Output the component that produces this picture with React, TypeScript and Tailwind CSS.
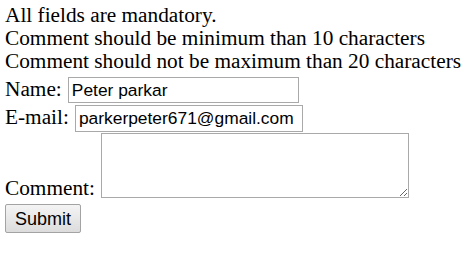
import React from "react";

export default function App() {
  return (
    <div className="min-h-[261px] w-[474px] bg-white pl-[5px] pt-[4px] text-black [font-family:'Liberation_Serif','Times_New_Roman',serif] text-[21.3px] leading-[23px]">
      <div>All fields are mandatory.</div>
      <div>Comment should be minimum than 10 characters</div>
      <div>Comment should not be maximum than 20 characters</div>
      <div className="mt-[4px] flex items-baseline">
        <span>Name:</span>
        <input
          readOnly
          defaultValue="Peter parkar"
          className="ml-[6px] h-[26px] w-[231px] border border-[#a9a9a9] px-[3px] text-[17.4px] text-black outline-none [font-family:'Liberation_Sans',Arial,sans-serif]"
        />
      </div>
      <div className="mt-[2px] flex items-baseline">
        <span>E-mail:</span>
        <input
          readOnly
          defaultValue="parkerpeter671@gmail.com"
          className="ml-[6px] h-[27px] w-[228px] border border-[#a9a9a9] pl-[3px] pr-0 text-[17.4px] text-black outline-none [font-family:'Liberation_Sans',Arial,sans-serif]"
        />
      </div>
      <div className="mt-[1px] flex items-end">
        <span className="mb-[-2px]">Comment:</span>
        <textarea
          readOnly
          className="ml-[6px] block h-[65px] w-[308px] border border-[#a9a9a9] outline-none"
        />
      </div>
      <div className="mt-[6px]">
        <button className="h-[29px] w-[76px] rounded-[2px] border border-[#a3a3a3] bg-gradient-to-b from-[#f4f4f4] to-[#dcdcdc] text-[18px] leading-[20px] text-black [font-family:'Liberation_Sans',Arial,sans-serif]">
          Submit
        </button>
      </div>
    </div>
  );
}
